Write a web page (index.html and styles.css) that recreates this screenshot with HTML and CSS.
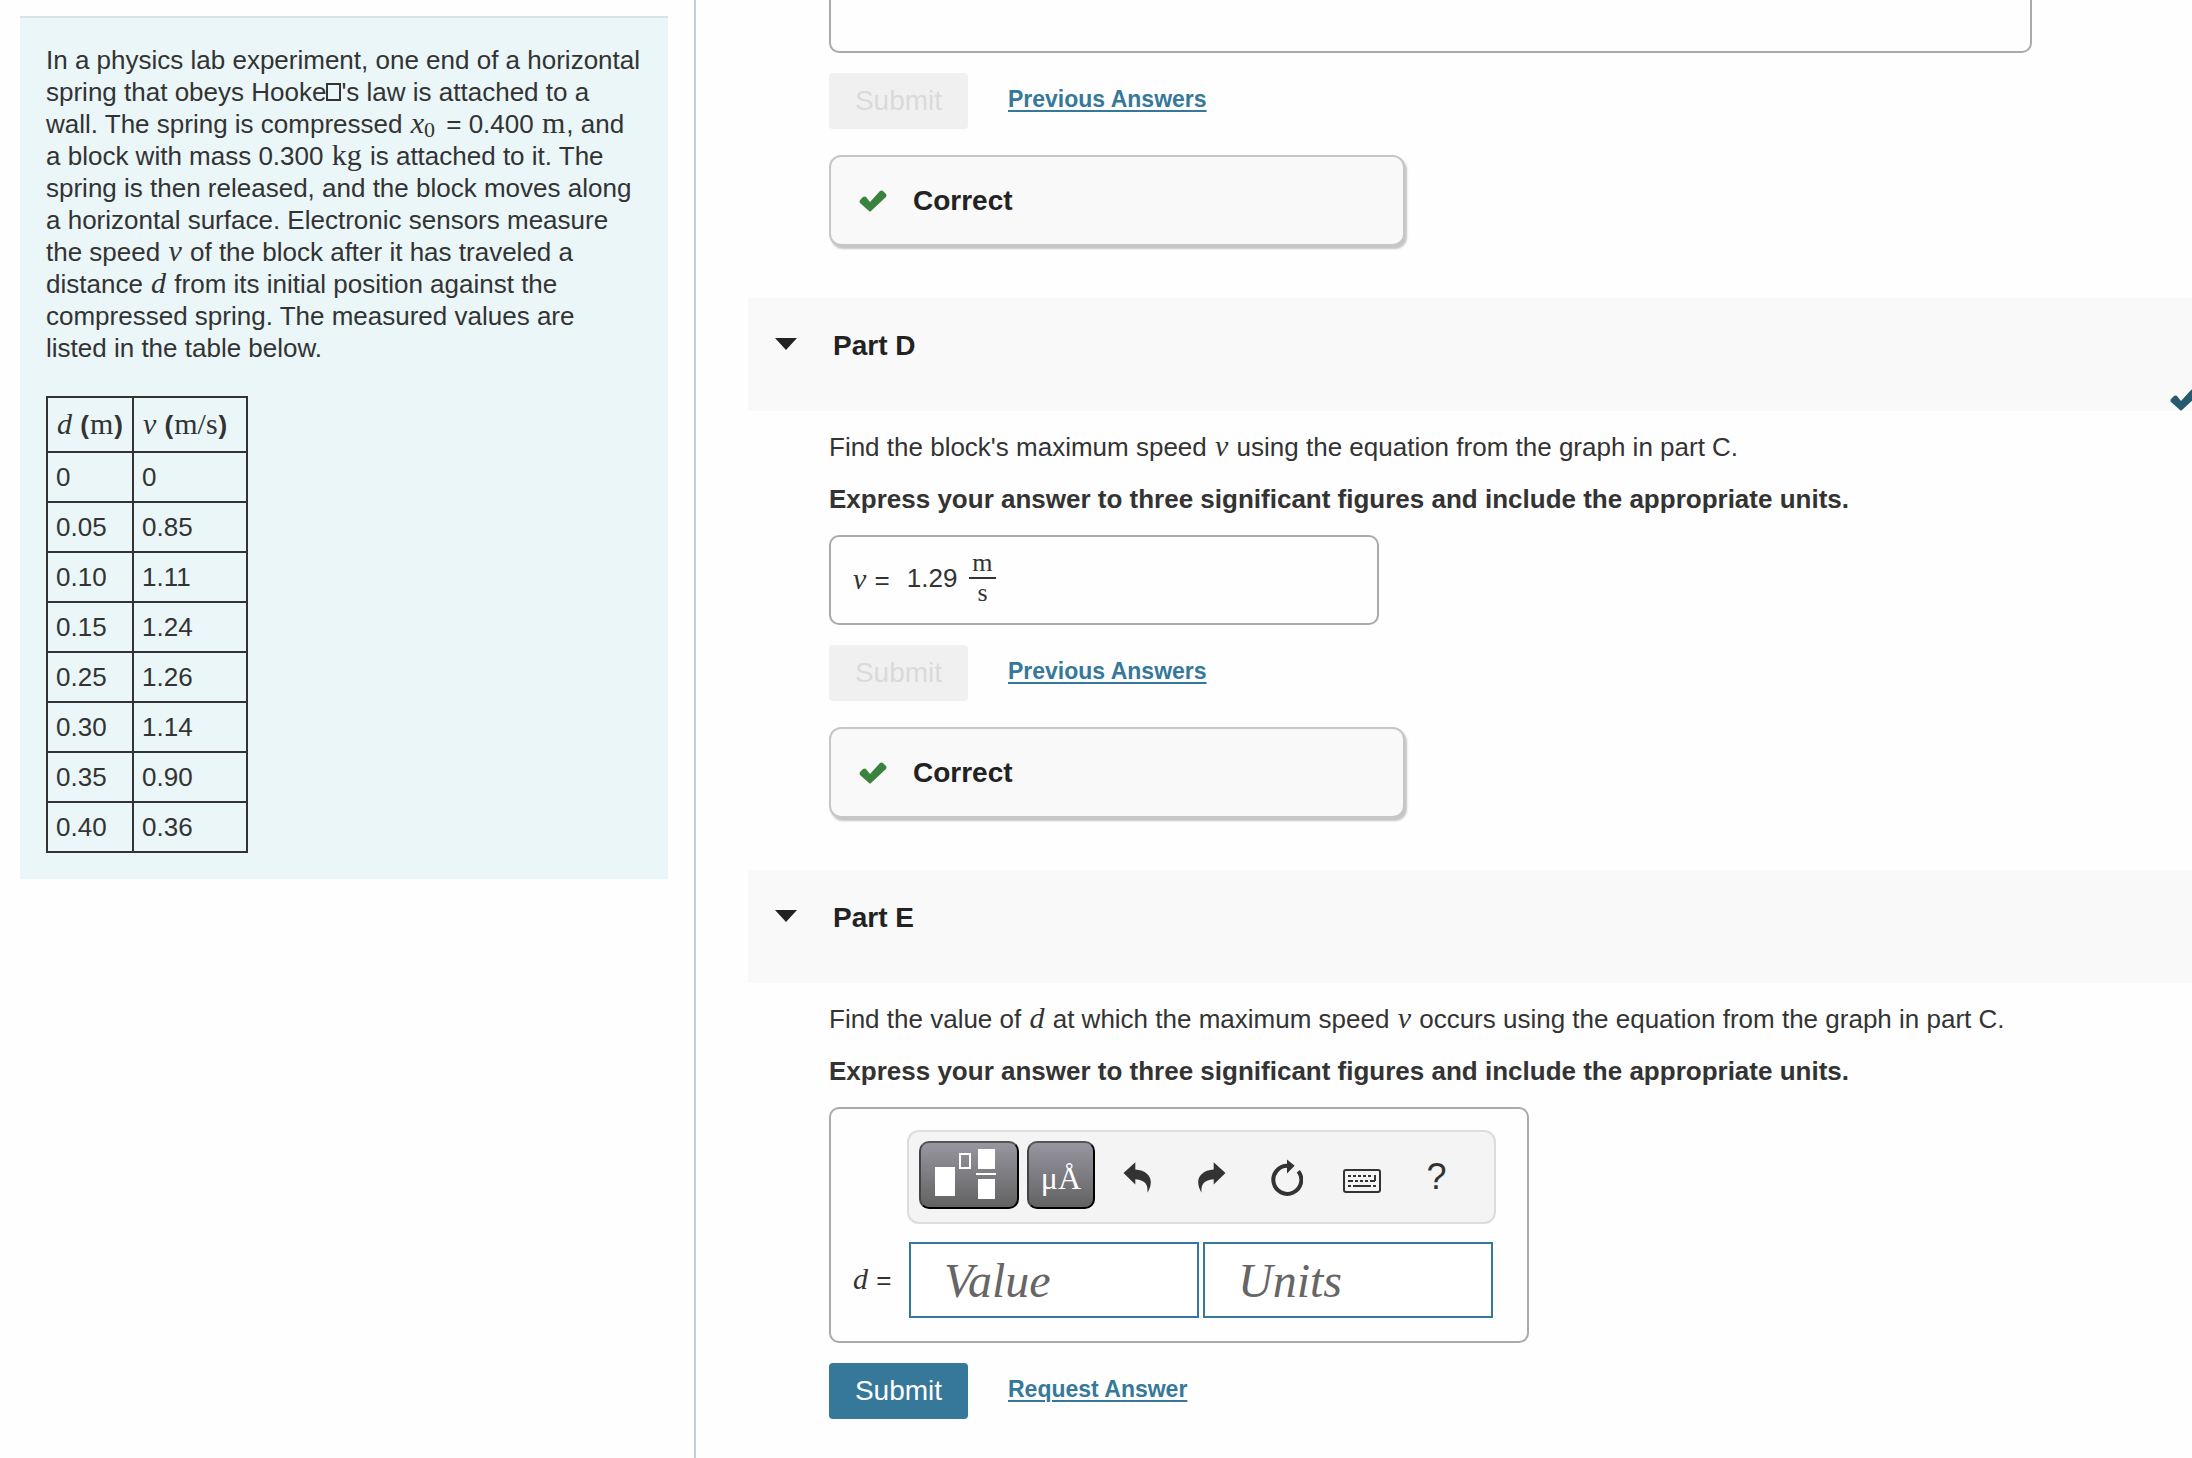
FILE: index.html
```html
<!DOCTYPE html>
<html lang="en">
	<head>
		<meta charset="utf-8">
		<title>Physics Lab: Spring and Block</title>
		<link rel="stylesheet" href="styles.css">
	</head>
	<body>
		<svg class="defs" aria-hidden="true">
			<symbol id="check" viewBox="0 0 28 22">
				<path d="M1 10 L4 7 Q6 6 7 7 L11 12 L21 1 Q23 0 24 1 L27 4 Q28 5 27 7 L12 21 Q11 22 10 21 L1 13 Q0 12 1 10Z"/>
			</symbol>
			<symbol id="undo" viewBox="0 0 82 92">
				<path d="M1 33 L36 1 V22 C66 24 82 40 82 60 C82 74 76 84 72 91 C74 70 68 53 36 51 V67Z"/>
			</symbol>
		</svg>
		<div class="page">
			<aside class="side">
				<div class="intro">
					<p>In a physics lab experiment, one end of a horizontal spring that obeys Hooke<span class="tofu"></span>'s law is attached to a wall. The spring is compressed <i class="math">x<sub>0</sub></i> = 0.400 <span class="math">m</span>, and a block with mass 0.300 <span class="math">kg</span> is attached to it. The spring is then released, and the block moves along a horizontal surface. Electronic sensors measure the speed <i class="math">v</i> of the block after it has traveled a distance <i class="math">d</i> from its initial position against the compressed spring. The measured values are listed in the table below.</p>
					<table>
						<tr><th class="col-d"><i class="math">d</i> (<span class="math">m</span>)</th><th class="col-v"><i class="math">v</i> (<span class="math">m/s</span>)</th></tr>
						<tr><td>0</td><td>0</td></tr>
						<tr><td>0.05</td><td>0.85</td></tr>
						<tr><td>0.10</td><td>1.11</td></tr>
						<tr><td>0.15</td><td>1.24</td></tr>
						<tr><td>0.25</td><td>1.26</td></tr>
						<tr><td>0.30</td><td>1.14</td></tr>
						<tr><td>0.35</td><td>0.90</td></tr>
						<tr><td>0.40</td><td>0.36</td></tr>
					</table>
				</div>
			</aside>
			<main class="main">
				<!-- end of part C -->
				<section class="content">
					<div class="graph"></div>
					<div class="actions">
						<button class="submit" disabled>Submit</button>
						<a href="#">Previous Answers</a>
					</div>
					<div class="correct"><svg><use href="#check"/></svg>Correct</div>
				</section>

				<section>
					<header class="part">
						<button class="toggle" aria-label="Collapse Part D"></button>
						<h2>Part D</h2>
						<svg class="done"><use href="#check"/></svg>
					</header>
					<div class="content">
						<p>Find the block's maximum speed <i class="math">v</i> using the equation from the graph in part C.</p>
						<p><b>Express your answer to three significant figures and include the appropriate units.</b></p>
						<div class="answer">
							<span class="name"><i class="math">v</i> =</span>
							<span class="number">1.29</span>
							<span class="frac"><span>m</span><span>s</span></span>
						</div>
						<div class="actions">
							<button class="submit" disabled>Submit</button>
							<a href="#">Previous Answers</a>
						</div>
						<div class="correct"><svg><use href="#check"/></svg>Correct</div>
					</div>
				</section>

				<section>
					<header class="part">
						<button class="toggle" aria-label="Collapse Part E"></button>
						<h2>Part E</h2>
					</header>
					<div class="content">
						<p>Find the value of <i class="math">d</i> at which the maximum speed <i class="math">v</i> occurs using the equation from the graph in part C.</p>
						<p><b>Express your answer to three significant figures and include the appropriate units.</b></p>
						<form class="entry">
							<div class="toolbar">
								<button type="button" class="dark templates" aria-label="Templates">
									<svg viewBox="0 0 96 64">
										<rect x="14" y="24" width="20" height="29"/>
										<rect class="line" x="39" y="11" width="10" height="14"/>
										<rect x="57" y="6" width="17" height="20"/>
										<rect x="55" y="30" width="20" height="2"/>
										<rect x="57" y="36" width="17" height="20"/>
									</svg>
								</button>
								<button type="button" class="dark symbols">μÅ</button>
								<div class="tools">
									<button type="button" aria-label="Undo"><svg class="arrow"><use href="#undo"/></svg></button>
									<button type="button" aria-label="Redo"><svg class="arrow redo"><use href="#undo"/></svg></button>
									<button type="button" aria-label="Reset">
										<svg class="reset" viewBox="0 0 96 110">
											<path class="ring" d="M50 20 A42 42 0 1 0 82 36"/>
											<path d="M48 1 L71 20 L48 43Z"/>
										</svg>
									</button>
									<button type="button" aria-label="Keyboard shortcuts">
										<svg class="keyboard" viewBox="0 0 38 24">
											<rect class="frame" x="1" y="1" width="36" height="22" rx="2"/>
											<path class="keys" d="M5 7h3m2 0h3m2 0h3m2 0h3m2 0h3M5 12h5m2 0h3m2 0h3m2 0h3m2 0h5M5 17h3m2 0h18m2 0h3M32 6v6"/>
										</svg>
									</button>
									<button type="button" class="help" aria-label="Help">?</button>
								</div>
							</div>
							<label class="name" for="value"><i class="math">d</i> =</label>
							<div class="fields">
								<input type="text" id="value" placeholder="Value">
								<input type="text" aria-label="Units" placeholder="Units">
							</div>
						</form>
						<div class="actions">
							<button class="submit">Submit</button>
							<a href="#">Request Answer</a>
						</div>
					</div>
				</section>
			</main>
		</div>
	</body>
</html>
```
FILE: styles.css
```css
* {margin:0; padding:0; box-sizing:border-box; }
body{
	font: 26px/32px "Liberation Sans", Arial, sans-serif;
	color: #333;
	background: #fefefe;
}
button{
	font: inherit;
	border: 0;
	background: none;
	cursor: pointer;
}
.defs{
	position: absolute;
	width: 0;
	height: 0;
}
.page{
	display: grid;
	grid-template-columns: minmax(300px, 694fr) 1498fr;
	min-height: 100vh;
}
.math{
	margin: 0 1px;
	font-family: "Liberation Serif", "Times New Roman", serif;
	font-size: 30px;
	line-height: 0;
	font-weight: normal;
}
.math sub{
	font-size: 22px;
	font-style: normal;
	line-height: 0;
	vertical-align: -4px;
	margin-right: 3px;
}

/* left column */
.side{
	padding: 16px 26px 0 20px;
}
.intro{
	padding: 26px;
	border-top: 2px solid #dae2e4;
	background: #eaf6f8;
}
.tofu{
	display: inline-block;
	width: 15px;
	height: 18px;
	border: 2px solid #333;
}
table{
	margin-top: 32px;
	border-collapse: collapse;
}
th, td{
	height: 50px;
	padding: 0 8px;
	border: 2px solid #333;
	text-align: left;
}
th{
	height: 55px;
	white-space: nowrap;
}
.col-d{
	width: 86px;
}
.col-v{
	width: 114px;
}

/* right column */
.main{
	border-left: 2px solid #bfcfdc;
	padding-left: 52px;
	overflow: hidden;
}
.content{
	padding: 0 20px 52px 81px;
}
.content p{
	margin-bottom: 20px;
}
.graph{
	max-width: 1203px;
	height: 53px;
	border: 2px solid #aaa;
	border-top: 0;
	border-radius: 0 0 10px 10px;
}
.part{
	position: relative;
	display: flex;
	align-items: flex-start;
	height: 113px;
	padding: 32px 27px;
	margin-bottom: 20px;
	background: #f9f9f9;
}
.part h2{
	margin-left: 36px;
	font-size: 28px;
	color: #222;
}
.toggle{
	margin-top: 8px;
	border: 11px solid transparent;
	border-top: 12px solid #222;
	border-bottom: 0;
}
.done{
	position: absolute;
	right: -6px;
	bottom: 0;
	width: 28px;
	height: 22px;
	fill: #285a6e;
}
.actions{
	display: flex;
	align-items: center;
	gap: 40px;
	margin-top: 20px;
}
.submit{
	width: 139px;
	height: 56px;
	border-radius: 4px;
	font-size: 28px;
	color: #fff;
	background: #367899;
}
.submit:disabled{
	color: #dadada;
	background: #f0f0f0;
}
.actions a{
	padding-bottom: 4px;
	font-size: 23px;
	font-weight: bold;
	color: #367899;
	text-underline-offset: 3px;
	text-decoration-thickness: 2px;
}
.correct{
	display: flex;
	align-items: center;
	gap: 26px;
	max-width: 576px;
	height: 91px;
	margin-top: 26px;
	padding-left: 28px;
	border: 2px solid #c6c6c6;
	border-radius: 12px;
	box-shadow: 2px 3px 2px #c6c6c6;
	font-size: 28px;
	font-weight: bold;
	color: #222;
	background: #f9f9f9;
}
.correct svg{
	width: 28px;
	height: 22px;
	fill: #39833f;
}
.answer, .entry{
	border: 2px solid #aaa;
	border-radius: 10px;
}
.answer{
	display: flex;
	align-items: center;
	max-width: 550px;
	height: 90px;
	padding-left: 21px;
}
.number{
	margin: 0 12px 4px 17px;
}
.frac{
	margin-bottom: 4px;
	font: 26px/28px "Liberation Serif", "Times New Roman", serif;
	text-align: center;
}
.frac span{
	display: block;
	padding: 0 3px;
}
.frac span + span{
	border-top: 2px solid #333;
}

/* answer editor */
.entry{
	display: grid;
	grid-template-columns: 55px minmax(0, 1fr);
	row-gap: 18px;
	align-items: center;
	max-width: 700px;
	padding: 21px 31px 23px 21px;
}
.toolbar{
	grid-column: 2;
	display: flex;
	align-items: center;
	gap: 8px;
	height: 94px;
	padding: 0 10px;
	border: 2px solid #dcdcdc;
	border-radius: 12px;
	background: #f4f4f4;
}
.dark{
	flex: none;
	height: 68px;
	margin-bottom: 4px;
	border: 2px solid #000;
	border-top-color: #555;
	border-left-color: #444;
	border-radius: 10px;
	color: #fff;
	background: linear-gradient(#98969f, #626262);
}
.templates{
	width: 100px;
}
.templates svg{
	display: block;
	fill: #fff;
}
.templates .line{
	fill: none;
	stroke: #fff;
	stroke-width: 2;
}
.symbols{
	width: 68px;
	padding-top: 6px;
	font: 32px/40px "Liberation Serif", "Times New Roman", serif;
}
.tools{
	display: flex;
	align-items: center;
	margin-left: -4px;
}
.tools button{
	display: flex;
	align-items: center;
	justify-content: center;
	width: 75px;
	height: 68px;
	fill: #333;
}
.arrow{
	width: 28px;
	height: 31px;
}
.redo{
	transform: scaleX(-1);
}
.reset{
	width: 32px;
	height: 37px;
}
.ring{
	fill: none;
	stroke: #333;
	stroke-width: 12;
}
.keyboard{
	width: 38px;
	height: 24px;
	margin-top: 8px;
}
.frame, .keys{
	fill: none;
	stroke: #333;
	stroke-width: 2;
}
.tools .help{
	font-size: 36px;
	color: #333;
}
.fields{
	display: flex;
	gap: 4px;
	padding: 0 3px 0 2px;
}
.fields input{
	flex: 1;
	min-width: 0;
	height: 76px;
	padding-left: 33px;
	border: 2px solid #367899;
	font: italic 48px "Liberation Serif", "Times New Roman", serif;
	color: #333;
	background: #fff;
}
.fields input::placeholder{
	color: #666;
}
```
